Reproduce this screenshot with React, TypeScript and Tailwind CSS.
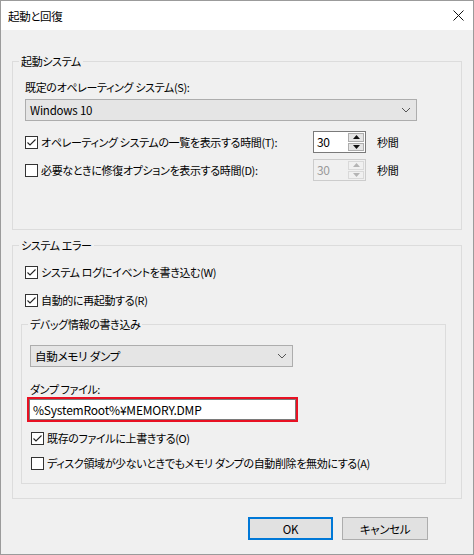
import type { ReactNode } from "react";

function CheckBox({ checked }: { checked: boolean }) {
  return (
    <span className="w-[13px] h-[13px] shrink-0 border border-[#333333] bg-white flex items-center justify-center">
      {checked && (
        <svg width="11" height="11" viewBox="0 0 11 11">
          <polyline points="1.5,5.5 4,8 9.5,2.5" fill="none" stroke="#222" strokeWidth="1.1" />
        </svg>
      )}
    </span>
  );
}

function CheckRow({ checked, children, className = "" }: { checked: boolean; children: ReactNode; className?: string }) {
  return (
    <div className={`flex items-center h-[20px] gap-[3px] ${className}`}>
      <CheckBox checked={checked} />
      <span className="leading-[16px] whitespace-nowrap">{children}</span>
    </div>
  );
}

function Chevron() {
  return (
    <svg width="10" height="6" viewBox="0 0 10 6">
      <polyline points="1,1 5,5 9,1" fill="none" stroke="#555" strokeWidth="1" />
    </svg>
  );
}

function Select({ value, className = "" }: { value: string; className?: string }) {
  return (
    <div className={`h-[22px] bg-[#e5e5e5] border border-[#adadad] flex items-center justify-between pl-[4px] pr-[5px] ${className}`}>
      <span className="leading-[16px] text-[11.5px] tracking-[-0.2px]">{value}</span>
      <Chevron />
    </div>
  );
}

function Arrow({ up, color }: { up: boolean; color: string }) {
  return (
    <svg width="7" height="4" viewBox="0 0 7 4">
      <polygon points={up ? "0,4 7,4 3.5,0" : "0,0 7,0 3.5,4"} fill={color} />
    </svg>
  );
}

function Spinner({ disabled }: { disabled?: boolean }) {
  const arrow = disabled ? "#b4b4b4" : "#111";
  const btn = disabled ? "border-[#d9d9d9] bg-[#f0f0f0]" : "border-[#adadad] bg-[#e5e5e5]";
  return (
    <div
      className={`w-[53px] h-[22px] flex border ${
        disabled ? "border-[#cccccc] bg-[#f0f0f0] text-[#9a9a9a]" : "border-[#7a7a7a] bg-white"
      }`}
    >
      <span className="flex-1 pl-[3px] leading-[20px] text-[12px]">30</span>
      <div className="w-[17px] flex flex-col gap-[1px] py-[1px] pr-[1px]">
        <div className={`flex-1 flex items-center justify-center border ${btn}`}>
          <Arrow up color={arrow} />
        </div>
        <div className={`flex-1 flex items-center justify-center border ${btn}`}>
          <Arrow up={false} color={arrow} />
        </div>
      </div>
    </div>
  );
}

function Group({ title, children, className = "" }: { title: string; children: ReactNode; className?: string }) {
  return (
    <fieldset className={`border border-[#dcdcdc] p-0 m-0 ${className}`}>
      <legend className="ml-[6px] px-[2px] leading-[16px]">{title}</legend>
      {children}
    </fieldset>
  );
}

export default function App() {
  return (
    <div className="w-[474px] h-[555px] border border-[#9b9b9b] bg-[#f0f0f0] flex flex-col text-[11px] tracking-[-0.35px] text-black font-['Noto_Sans_CJK_JP',sans-serif] [font-feature-settings:'palt']">
      <div className="h-[29px] shrink-0 bg-white flex items-center justify-between pl-[7px] pr-[9px]">
        <span className="leading-[16px] text-[11.5px]">起動と回復</span>
        <svg width="11" height="11" viewBox="0 0 11 11">
          <path d="M0.5 0.5 L10.5 10.5 M10.5 0.5 L0.5 10.5" stroke="#111" strokeWidth="1" />
        </svg>
      </div>

      <div className="flex-1 px-[11px] pt-[23px] flex flex-col">
        <Group title="起動システム">
          <div className="px-[12px] pb-[48px]">
            <div className="mt-[10px] leading-[16px]">既定のオペレーティング システム(S):</div>
            <Select value="Windows 10" className="mt-[4px] w-[392px]" />
            <div className="mt-[10px] h-[22px] flex items-center">
              <CheckRow checked className="w-[288px]">
                オペレーティング システムの一覧を表示する時間(T):
              </CheckRow>
              <Spinner />
              <span className="ml-[11px] leading-[16px]">秒間</span>
            </div>
            <div className="mt-[6px] h-[22px] flex items-center">
              <CheckRow checked={false} className="w-[288px]">
                必要なときに修復オプションを表示する時間(D):
              </CheckRow>
              <Spinner disabled />
              <span className="ml-[11px] leading-[16px]">秒間</span>
            </div>
          </div>
        </Group>

        <Group title="システム エラー" className="mt-[7px]">
          <div className="pl-[8px] pr-[15px] pb-[14px]">
            <CheckRow checked className="mt-[9px] ml-[4px]">
              システム ログにイベントを書き込む(W)
            </CheckRow>
            <CheckRow checked className="mt-[8px] ml-[4px]">
              自動的に再起動する(R)
            </CheckRow>
            <Group title="デバッグ情報の書き込み" className="mt-[6px]">
              <div className="px-[8px] pb-[10px]">
                <Select value="自動メモリ ダンプ" className="mt-[13px] w-[263px]" />
                <div className="mt-[14px] leading-[16px]">ダンプ ファイル:</div>
                <div className="ml-[-3px] w-[271px] border-2 border-[#e81123]">
                  <div className="h-[21px] border border-[#7a7a7a] bg-white pl-[3px] leading-[19px] text-[12px] tracking-[-0.2px]">
                    %SystemRoot%¥MEMORY.DMP
                  </div>
                </div>
                <CheckRow checked className="mt-[6px] ml-[1px]">
                  既存のファイルに上書きする(O)
                </CheckRow>
                <CheckRow checked={false} className="mt-[5px] ml-[1px]">
                  ディスク領域が少ないときでもメモリ ダンプの自動削除を無効にする(A)
                </CheckRow>
              </div>
            </Group>
          </div>
        </Group>

        <div className="mt-[18px] flex justify-end gap-[9px] pr-[34px]">
          <button className="w-[85px] h-[23px] bg-[#e1e1e1] border-2 border-[#0078d7] leading-[16px] text-[11.5px]">OK</button>
          <button className="w-[86px] h-[23px] bg-[#e1e1e1] border border-[#adadad] leading-[16px] text-[11.5px]">キャンセル</button>
        </div>
      </div>
    </div>
  );
}
